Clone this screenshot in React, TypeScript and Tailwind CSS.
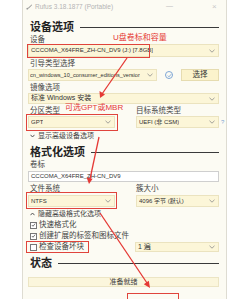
import React from "react";

const Chevron = () => (
  <svg width="6" height="4" viewBox="0 0 6 4" className="shrink-0">
    <polyline points="0.5,0.8 3,3.2 5.5,0.8" fill="none" stroke="#8a8a8a" strokeWidth="0.8" />
  </svg>
);

const Select = ({ text, className = "" }: { text: string; className?: string }) => (
  <div
    className={`flex items-center justify-between bg-[#fcf6d8] border border-[#ebe3bf] pl-[2px] pr-[3px] text-[6px] text-[#333] overflow-hidden whitespace-nowrap ${className}`}
  >
    <span className="overflow-hidden">{text}</span>
    <Chevron />
  </div>
);

const Label = ({ text, className = "" }: { text: string; className?: string }) => (
  <div className={`flex items-center pl-[2px] text-[7.5px] text-[#444] ${className}`}>{text}</div>
);

const Heading = ({ text, className = "" }: { text: string; className?: string }) => (
  <div className={`flex items-center h-[16px] pl-[2px] ${className}`}>
    <span className="text-[11px] font-bold text-[#222]">{text}</span>
    <div className="flex-1 h-px bg-[#3a3a3a] ml-[6px]" />
  </div>
);

const Check = ({ text, checked }: { text: string; checked: boolean }) => (
  <div className="flex items-center gap-[2px] pl-[2px] h-[10px] text-[7.5px] text-[#444]">
    <div className="w-[7px] h-[7px] border border-[#777] bg-white flex items-center justify-center">
      {checked && (
        <svg width="6" height="6" viewBox="0 0 6 6">
          <polyline points="1,3 2.4,4.5 5,1.3" fill="none" stroke="#333" strokeWidth="0.8" />
        </svg>
      )}
    </div>
    <span>{text}</span>
  </div>
);

export default function App() {
  return (
    <div className="relative w-[250px] h-[299px] bg-white flex overflow-hidden font-['Liberation_Sans','Noto_Sans_CJK_SC',sans-serif]">
      {/* WINDOW */}
      <div className="ml-[22px] w-[205px] h-full bg-[#fcfbf3] border-x border-[#dedcd2] flex flex-col">
        {/* title bar */}
        <div className="h-[13px] flex items-center pl-[3px] text-[6.5px] text-[#b4b4b4]">
          <svg width="7" height="7" viewBox="0 0 7 7" className="mr-[2px]">
            <path d="M1 6 L2.4 4.6 L5.6 1.4 L6.2 2 L3 5.2 Z" fill="#9a9a9a" />
            <circle cx="1.3" cy="5.7" r="0.9" fill="#9a9a9a" />
          </svg>
          <span>Rufus 3.18.1877 (Portable)</span>
          <span className="ml-[53px] text-[7px] text-[#c0c0c0]">—</span>
          <span className="ml-[39px] text-[8px] text-[#c8c8c8]">×</span>
        </div>

        <div className="flex flex-col pl-[5px] pr-[7px]">
          <Heading text="设备选项" className="mt-[6px]" />
          <Label text="设备" className="h-[9px]" />
          <Select text="CCCOMA_X64FRE_ZH-CN_DV9 (J:) [7.8GB]" className="h-[13px]" />

          <Label text="引导类型选择" className="mt-[2px] h-[10px]" />
          <div className="flex items-center h-[12px]">
            <Select text="cn_windows_10_consumer_editions_versior" className="w-[129px] h-full !text-[5.6px] !pl-[1px]" />
            <div className="ml-[8px] w-[8px] h-[8px] rounded-full border border-[#7ea6d6] flex items-center justify-center">
              <svg width="5" height="5" viewBox="0 0 5 5">
                <polyline points="0.8,2.6 2,3.8 4.2,1.2" fill="none" stroke="#5b8fd0" strokeWidth="0.7" />
              </svg>
            </div>
            <div className="ml-auto w-[38px] h-full bg-[#fbf3cc] border border-[#e6dcb0] flex items-center justify-center text-[7.5px] text-[#333]">
              选择
            </div>
          </div>

          <Label text="镜像选项" className="mt-[2px] h-[10px]" />
          <Select text="标准 Windows 安装" className="h-[11px] text-[7px]" />

          <div className="grid grid-cols-[87px_1fr] gap-x-[21px] mt-[2px]">
            <Label text="分区类型" className="h-[10px]" />
            <Label text="目标系统类型" className="h-[10px] !pl-0" />
            <Select text="GPT" className="h-[12px]" />
            <div className="flex items-center h-[12px]">
              <Select text="UEFI (非 CSM)" className="w-[83px] h-full" />
              <span className="ml-[2px] text-[6px] text-[#7aa3d4]">?</span>
            </div>
          </div>

          <div className="mt-[3px] h-[10px] flex items-center pl-[2px] gap-[3px] text-[7px] text-[#444]">
            <svg width="5" height="4" viewBox="0 0 5 4">
              <polyline points="0.5,0.8 2.5,3 4.5,0.8" fill="none" stroke="#444" strokeWidth="0.9" />
            </svg>
            <span>显示高级设备选项</span>
          </div>

          <Heading text="格式化选项" className="mt-[3px]" />
          <Label text="卷标" className="h-[10px]" />
          <div className="mt-[1px] h-[11px] bg-white border border-[#cfcfcf] flex items-center pl-[2px] text-[6px] text-[#333]">
            CCCOMA_X64FRE_ZH-CN_DV9
          </div>

          <div className="grid grid-cols-[87px_1fr] gap-x-[21px] mt-[2px]">
            <Label text="文件系统" className="h-[10px]" />
            <Label text="簇大小" className="h-[10px] !pl-0" />
            <Select text="NTFS" className="h-[12px] mt-[1px]" />
            <Select text="4096 字节 (默认)" className="h-[12px] mt-[1px]" />
          </div>

          <div className="mt-[2px] h-[10px] flex items-center pl-[2px] gap-[3px] text-[7px] text-[#444]">
            <svg width="5" height="4" viewBox="0 0 5 4">
              <polyline points="0.5,3.2 2.5,1 4.5,3.2" fill="none" stroke="#444" strokeWidth="0.9" />
            </svg>
            <span>隐藏高级格式化选项</span>
          </div>
          <div className="mt-[1px]">
            <Check text="快速格式化" checked />
          </div>
          <div className="mt-[1px]">
            <Check text="创建扩展的标签和图标文件" checked />
          </div>
          <div className="mt-[1px] grid grid-cols-[87px_1fr] gap-x-[20px]">
            <Check text="检查设备坏块" checked={false} />
            <Select text="1 遍" className="h-[10px] text-[7px]" />
          </div>

          <Heading text="状态" className="mt-[3px]" />
          <div className="mt-[6px] h-[10px] bg-[#fbf6dc] border border-[#ece5c4] flex items-center justify-center text-[7px] text-[#444]">
            准备就绪
          </div>
        </div>
      </div>

      {/* ANNOTATIONS */}
      <div className="absolute inset-0 pointer-events-none">
        <div className="absolute left-[27px] top-[44px] w-[123px] h-[14px] border border-[#e0443c]" />
        <div className="absolute left-[26px] top-[114px] w-[92px] h-[17px] border border-[#e0443c]" />
        <div className="absolute left-[26px] top-[192px] w-[91px] h-[17px] border border-[#e0443c]" />
        <div className="absolute left-[26px] top-[241px] w-[63px] h-[12px] border border-[#e0443c]" />
        <div className="absolute left-[127px] top-[293px] w-[52px] h-[10px] border border-[#e0443c]" />

        <div className="absolute left-[113px] top-[33px] text-[8px] leading-[10px] text-[#e53935] whitespace-nowrap">
          U盘卷标和容量
        </div>
        <div className="absolute left-[65px] top-[103px] text-[8px] leading-[10px] text-[#e53935] whitespace-nowrap">
          可选GPT或MBR
        </div>

        <svg className="absolute left-0 top-0" width="250" height="299" viewBox="0 0 250 299">
          <g stroke="#e53935" strokeWidth="1.3" fill="#e53935">
            <line x1="127" y1="58" x2="102" y2="94" />
            <polygon points="100,98 99.5,91 105,94.5" stroke="none" />
            <line x1="99" y1="137" x2="90" y2="179" />
            <polygon points="89,184 86.6,177.5 92.6,178.8" stroke="none" />
            <line x1="100" y1="213" x2="147" y2="283" />
            <polygon points="150,288 143.8,284.2 148.8,280.8" stroke="none" />
          </g>
        </svg>
      </div>
    </div>
  );
}
